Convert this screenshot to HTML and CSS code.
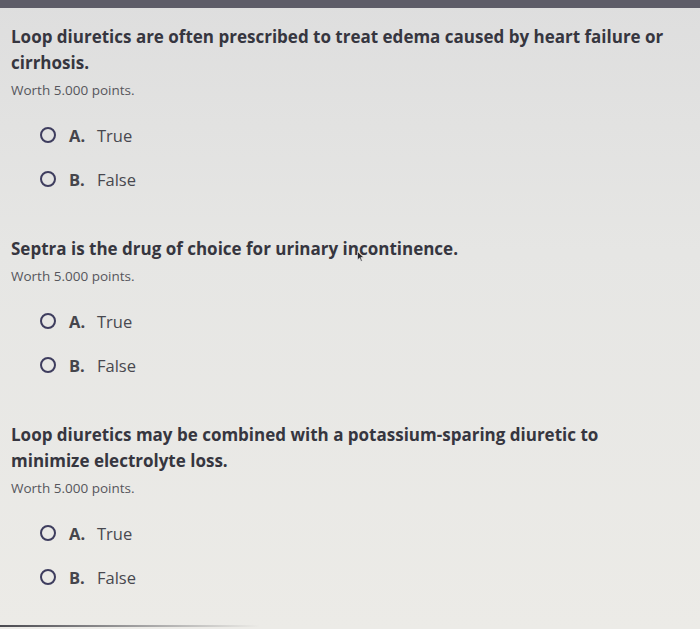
FILE: index.html
```html
<!DOCTYPE html>
<html>
<head>
<meta charset="utf-8">
<link rel="stylesheet" href="styles.css">
</head>
<body>
<div class="topbar"></div>
<main class="quiz">
  <section class="question">
    <h2 class="q-title">Loop diuretics are often prescribed to treat edema caused by heart failure or cirrhosis.</h2>
    <p class="q-worth">Worth 5.000 points.</p>
    <ul class="options">
      <li class="option"><span class="radio"></span><span class="letter">A.</span><span class="text">True</span></li>
      <li class="option"><span class="radio"></span><span class="letter">B.</span><span class="text">False</span></li>
    </ul>
  </section>
  <section class="question">
    <h2 class="q-title">Septra is the drug of choice for urinary incontinence.</h2>
    <p class="q-worth">Worth 5.000 points.</p>
    <ul class="options">
      <li class="option"><span class="radio"></span><span class="letter">A.</span><span class="text">True</span></li>
      <li class="option"><span class="radio"></span><span class="letter">B.</span><span class="text">False</span></li>
    </ul>
  </section>
  <section class="question">
    <h2 class="q-title">Loop diuretics may be combined with a potassium-sparing diuretic to minimize electrolyte loss.</h2>
    <p class="q-worth">Worth 5.000 points.</p>
    <ul class="options">
      <li class="option"><span class="radio"></span><span class="letter">A.</span><span class="text">True</span></li>
      <li class="option"><span class="radio"></span><span class="letter">B.</span><span class="text">False</span></li>
    </ul>
  </section>
</main>
<svg class="cursor" width="8" height="11" viewBox="0 0 8 11"><path d="M0.5 0.5 L0.5 9 L2.6 7 L4 10.3 L5.3 9.7 L3.9 6.5 L6.8 6.5 Z" fill="#2b2b30" stroke="#f0f0f0" stroke-width="0.6"/></svg>
<div class="bottomline"></div>
</body>
</html>
```
FILE: styles.css
```css
html, body {
  margin: 0;
  padding: 0;
}
body {
  position: relative;
  width: 700px;
  height: 629px;
  overflow: hidden;
  font-family: "Open Sans", "Liberation Sans", sans-serif;
  background: linear-gradient(180deg, #dedede 0%, #e6e6e4 40%, #ecebe7 100%);
}
.topbar {
  height: 8px;
  background: #5e5d68;
}
.quiz {
  display: flex;
  flex-direction: column;
  gap: 45px;
  padding: 16px 30px 0 11px;
}
.question {
  display: flex;
  flex-direction: column;
}
.q-title {
  margin: 0;
  font-size: 17px;
  line-height: 26px;
  font-weight: 700;
  color: #36363f;
}
.q-worth {
  margin: 5px 0 0;
  font-size: 13.5px;
  line-height: 18px;
  color: #56565c;
}
.options {
  list-style: none;
  margin: 24px 0 0;
  padding: 0 0 0 29px;
  display: flex;
  flex-direction: column;
  gap: 20px;
}
.option {
  display: flex;
  align-items: center;
  height: 24px;
  font-size: 16.5px;
  color: #48484f;
}
.radio {
  width: 12px;
  height: 12px;
  border: 2px solid #3e3d5e;
  border-radius: 50%;
  box-sizing: content-box;
  margin-right: 13px;
}
.letter {
  font-weight: 700;
  color: #45454c;
  width: 28px;
}
.text {
  font-weight: 400;
}
.cursor {
  position: absolute;
  left: 357px;
  top: 251px;
}
.bottomline {
  position: absolute;
  left: 0;
  bottom: 2px;
  width: 260px;
  height: 2px;
  background: linear-gradient(90deg, #4a4a50, rgba(74, 74, 80, 0));
}
```
